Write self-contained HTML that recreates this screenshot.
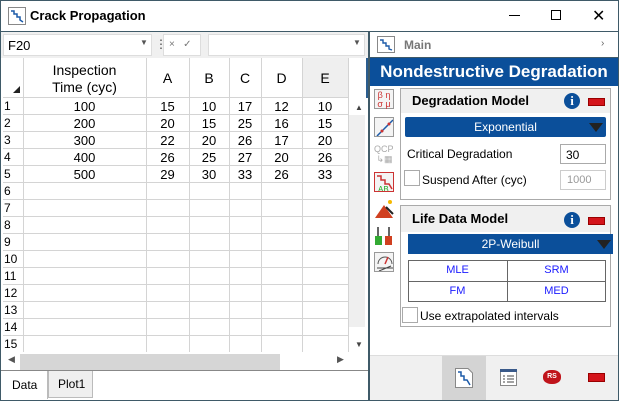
<!DOCTYPE html>
<html><head><style>
*{box-sizing:border-box;margin:0;padding:0}
body{width:619px;height:401px;position:relative;overflow:hidden;background:#fff;font-family:"Liberation Sans",Arial,sans-serif;font-size:12px;color:#000}
.a{position:absolute}
.win{left:0;top:0;width:619px;height:401px;border:1px solid #3f5a68}
.cell{position:absolute;text-align:center;font-size:13px;line-height:17px}
.vl{position:absolute;width:1px;background:#d4d4d4}
.hl{position:absolute;height:1px;background:#d4d4d4}
.rn{position:absolute;left:4px;width:19px;font-size:12px;line-height:17px}
.ic{position:absolute;left:374px;width:20px;height:20px;border:1px solid #999;background:#f4f4f4}
</style></head><body>
<div class="a win"></div>
<!-- title -->
<div class="a" style="left:8px;top:7px;width:18px;height:18px;border:1px solid #888;background:#fff"></div>
<svg class="a" style="left:9px;top:8px" width="16" height="16"><path d="M2 3 L5 3 L5 6 L8 6 L8 9 L11 9 L11 12 L14 14" fill="none" stroke="#1c5aa8" stroke-width="1.5"/></svg>
<div class="a" style="left:30px;top:8px;font-weight:bold;font-size:13px">Crack Propagation</div>
<div class="a" style="left:509px;top:15px;width:11px;height:1px;background:#000"></div>
<div class="a" style="left:551px;top:10px;width:10px;height:10px;border:1px solid #000"></div>
<div class="a" style="left:592px;top:6px;font-size:16px">✕</div>
<div class="a" style="left:1px;top:31px;width:617px;height:1px;background:#3f5a68"></div>
<!-- formula bar -->
<div class="a" style="left:1px;top:32px;width:367px;height:26px;background:#f0f0f0"></div>
<div class="a" style="left:3px;top:34px;width:149px;height:22px;background:#fff;border:1px solid #ddd"></div>
<div class="a" style="left:8px;top:38px;font-size:13px">F20</div>
<div class="a" style="left:140px;top:38px;font-size:8px;color:#555">▼</div>
<div class="a" style="left:155px;top:37px;font-size:12px;color:#444">⋮</div>
<div class="a" style="left:163px;top:34px;width:38px;height:22px;background:#fff;border:1px solid #ddd;color:#777;font-size:10px;padding:4px 0 0 5px">×&nbsp;&nbsp;&nbsp;✓</div>
<div class="a" style="left:208px;top:34px;width:157px;height:22px;background:#fff;border:1px solid #ddd"></div>
<div class="a" style="left:353px;top:38px;font-size:8px;color:#555">▼</div>
<!-- grid -->
<div class="a" style="left:3px;top:58px;width:363px;height:294px;background:#fff"></div>
<div class="a" style="left:302px;top:58px;width:46px;height:40px;background:#efefef"></div>
<div class="a" style="left:348px;top:115px;width:17px;height:212px;background:#efefef"></div>
<div class="a" style="left:355px;top:103px;font-size:8px;color:#444">▲</div>
<div class="a" style="left:355px;top:340px;font-size:8px;color:#444">▼</div>
<div class="a" style="left:366px;top:58px;width:2px;height:40px;background:#2a5d8f"></div>
<div class="vl" style="left:23px;top:58px;height:294px"></div>
<div class="vl" style="left:146px;top:58px;height:294px"></div>
<div class="vl" style="left:189px;top:58px;height:294px"></div>
<div class="vl" style="left:229px;top:58px;height:294px"></div>
<div class="vl" style="left:261px;top:58px;height:294px"></div>
<div class="vl" style="left:302px;top:58px;height:294px"></div>
<div class="vl" style="left:348px;top:58px;height:294px"></div>
<div class="hl" style="left:3px;top:97px;width:345px"></div>
<div class="hl" style="left:3px;top:114px;width:345px"></div>
<div class="hl" style="left:3px;top:131px;width:345px"></div>
<div class="hl" style="left:3px;top:148px;width:345px"></div>
<div class="hl" style="left:3px;top:165px;width:345px"></div>
<div class="hl" style="left:3px;top:182px;width:345px"></div>
<div class="hl" style="left:3px;top:199px;width:345px"></div>
<div class="hl" style="left:3px;top:216px;width:345px"></div>
<div class="hl" style="left:3px;top:233px;width:345px"></div>
<div class="hl" style="left:3px;top:250px;width:345px"></div>
<div class="hl" style="left:3px;top:267px;width:345px"></div>
<div class="hl" style="left:3px;top:284px;width:345px"></div>
<div class="hl" style="left:3px;top:301px;width:345px"></div>
<div class="hl" style="left:3px;top:318px;width:345px"></div>
<div class="hl" style="left:3px;top:335px;width:345px"></div>
<svg class="a" style="left:13px;top:86px" width="8" height="8"><path d="M7 0L7 7L0 7Z" fill="#222"/></svg>
<div class="cell" style="left:23px;top:62px;width:123px;font-size:14px;line-height:17px">Inspection<br>Time (cyc)</div>
<div class="cell" style="left:146px;top:70px;width:43px;font-size:14px">A</div>
<div class="cell" style="left:189px;top:70px;width:40px;font-size:14px">B</div>
<div class="cell" style="left:229px;top:70px;width:32px;font-size:14px">C</div>
<div class="cell" style="left:261px;top:70px;width:41px;font-size:14px">D</div>
<div class="cell" style="left:302px;top:70px;width:46px;font-size:14px">E</div>
<div class="rn" style="top:98px">1</div><div class="rn" style="top:115px">2</div><div class="rn" style="top:132px">3</div><div class="rn" style="top:149px">4</div><div class="rn" style="top:166px">5</div><div class="rn" style="top:183px">6</div><div class="rn" style="top:200px">7</div><div class="rn" style="top:217px">8</div><div class="rn" style="top:234px">9</div><div class="rn" style="top:251px">10</div><div class="rn" style="top:268px">11</div><div class="rn" style="top:285px">12</div><div class="rn" style="top:302px">13</div><div class="rn" style="top:319px">14</div><div class="rn" style="top:336px">15</div>
<div class="cell" style="left:23px;top:98px;width:123px">100<br>200<br>300<br>400<br>500</div>
<div class="cell" style="left:146px;top:98px;width:43px">15<br>20<br>22<br>26<br>29</div>
<div class="cell" style="left:189px;top:98px;width:40px">10<br>15<br>20<br>25<br>30</div>
<div class="cell" style="left:229px;top:98px;width:32px">17<br>25<br>26<br>27<br>33</div>
<div class="cell" style="left:261px;top:98px;width:41px">12<br>16<br>17<br>20<br>26</div>
<div class="cell" style="left:302px;top:98px;width:46px">10<br>15<br>20<br>26<br>33</div>
<!-- hscroll -->
<div class="a" style="left:3px;top:352px;width:363px;height:18px;background:#fff"></div>
<div class="a" style="left:20px;top:354px;width:260px;height:16px;background:#d6d6d6"></div>
<div class="a" style="left:8px;top:354px;font-size:9px;color:#555">◀</div>
<div class="a" style="left:337px;top:354px;font-size:9px;color:#555">▶</div>
<div class="a" style="left:1px;top:370px;width:367px;height:1px;background:#888"></div>
<div class="a" style="left:1px;top:371px;width:367px;height:29px;background:#fff"></div>
<div class="a" style="left:1px;top:371px;width:47px;height:28px;background:#fff;border-right:1px solid #bbb;font-size:12px;padding:7px 0 0 11px">Data</div>
<div class="a" style="left:48px;top:371px;width:45px;height:27px;background:#efefef;border:1px solid #bbb;border-top:none;padding:6px 0 0 9px">Plot1</div>
<div class="a" style="left:368px;top:32px;width:2px;height:368px;background:#3f5a68"></div>
<!-- right panel -->
<div class="a" style="left:370px;top:32px;width:248px;height:25px;background:#fff"></div>
<svg class="a" style="left:377px;top:36px" width="18" height="17"><rect x="0.5" y="0.5" width="17" height="16" fill="#fff" stroke="#888"/><path d="M3 4L6 4L6 7L9 7L9 10L12 10L12 13L15 14" fill="none" stroke="#1c5aa8" stroke-width="1.4"/></svg>
<div class="a" style="left:404px;top:38px;font-weight:bold;color:#777;font-size:12px">Main</div>
<div class="a" style="left:601px;top:38px;color:#666;font-size:10px">›</div>
<div class="a" style="left:368px;top:57px;width:251px;height:1px;background:#3f5a68"></div>
<div class="a" style="left:370px;top:58px;width:248px;height:28px;background:#0b4f9a;color:#fff;font-weight:bold;font-size:17px;text-align:center;line-height:28px">Nondestructive Degradation</div>
<div class="a" style="left:370px;top:86px;width:248px;height:269px;background:#fff"></div>
<div class="ic" style="top:89px;font-size:9px;color:#c33;line-height:9px;text-align:center;padding-top:1px">β η<br>σ μ</div>
<svg class="a ic" style="top:117px" width="20" height="20"><path d="M2 18L18 2" stroke="#1c5aa8" stroke-width="1.5"/><circle cx="7" cy="13" r="1.5" fill="#c33"/><circle cx="14" cy="6" r="1.5" fill="#c33"/></svg>
<div class="a" style="left:374px;top:144px;font-size:9px;color:#aaa">QCP<br>&nbsp;↳▦</div>
<svg class="a ic" style="top:172px;border-color:#c33" width="20" height="20"><path d="M2 3L6 3L6 7L10 7L10 11L14 11L17 16" fill="none" stroke="#c33" stroke-width="1.5"/><text x="3" y="19" font-size="8" fill="#2a2" font-family="Liberation Sans">AB</text></svg>
<svg class="a" style="left:374px;top:199px" width="20" height="20"><path d="M1 19L10 6L19 19Z" fill="#d04020"/><path d="M12 8L19 15" stroke="#222" stroke-width="2"/><circle cx="16" cy="3" r="2" fill="#f5b800"/></svg>
<svg class="a" style="left:374px;top:226px" width="20" height="20"><rect x="1" y="10" width="7" height="9" fill="#3a3"/><rect x="11" y="10" width="7" height="9" fill="#d04020"/><path d="M4 1V10M15 1V10" stroke="#333" stroke-width="1.5"/></svg>
<svg class="a ic" style="top:252px" width="20" height="20"><path d="M3 11A7 7 0 0 1 17 11" fill="none" stroke="#555"/><path d="M10 11L13 4" stroke="#c33" stroke-width="1.5"/><path d="M2 15L18 15M4 18L16 13" stroke="#444"/></svg>
<!-- degradation model box -->
<div class="a" style="left:400px;top:88px;width:211px;height:112px;border:1px solid #aaa;background:#fff"></div>
<div class="a" style="left:401px;top:89px;width:209px;height:24px;background:#f0f0f0"></div>
<div class="a" style="left:412px;top:93px;font-weight:bold;font-size:13px">Degradation Model</div>
<div class="a" style="left:564px;top:93px;width:16px;height:16px;border-radius:50%;background:#0b4f9a;color:#fff;font-weight:bold;font-size:13px;text-align:center;line-height:16px;font-family:'Liberation Serif',serif">i</div>
<div class="a" style="left:588px;top:98px;width:17px;height:8px;background:#d4141b;border:1px solid #900"></div>
<div class="a" style="left:405px;top:117px;width:201px;height:20px;background:#0b4f9a;color:#fff;text-align:center;line-height:20px;font-size:12px;border-radius:2px">Exponential</div>
<svg class="a" style="left:589px;top:123px" width="14" height="9"><path d="M0 0L14 0L7 9Z" fill="#222"/></svg>
<div class="a" style="left:407px;top:147px;font-size:12px">Critical Degradation</div>
<div class="a" style="left:560px;top:144px;width:46px;height:20px;border:1px solid #aaa;padding:3px 0 0 5px">30</div>
<div class="a" style="left:404px;top:170px;width:16px;height:16px;border:1px solid #aaa"></div>
<div class="a" style="left:422px;top:173px;font-size:12px">Suspend After (cyc)</div>
<div class="a" style="left:560px;top:170px;width:46px;height:20px;border:1px solid #ccc;padding:3px 0 0 6px;color:#999;font-size:11px">1000</div>
<!-- life data model box -->
<div class="a" style="left:400px;top:205px;width:211px;height:122px;border:1px solid #aaa;background:#fff"></div>
<div class="a" style="left:401px;top:206px;width:209px;height:26px;background:#f0f0f0"></div>
<div class="a" style="left:412px;top:211px;font-weight:bold;font-size:13px">Life Data Model</div>
<div class="a" style="left:564px;top:212px;width:16px;height:16px;border-radius:50%;background:#0b4f9a;color:#fff;font-weight:bold;font-size:13px;text-align:center;line-height:16px;font-family:'Liberation Serif',serif">i</div>
<div class="a" style="left:588px;top:217px;width:17px;height:8px;background:#d4141b;border:1px solid #900"></div>
<div class="a" style="left:408px;top:234px;width:205px;height:20px;background:#0b4f9a;color:#fff;text-align:center;line-height:20px;font-size:12px">2P-Weibull</div>
<svg class="a" style="left:597px;top:240px" width="14" height="9"><path d="M0 0L14 0L7 9Z" fill="#222"/></svg>
<div class="a" style="left:408px;top:260px;width:198px;height:42px;border:1px solid #666"></div>
<div class="a" style="left:507px;top:260px;width:1px;height:42px;background:#666"></div>
<div class="a" style="left:408px;top:281px;width:198px;height:1px;background:#666"></div>
<div class="a" style="left:408px;top:264px;width:99px;text-align:center;color:#1a1aff;font-size:11px">MLE</div>
<div class="a" style="left:507px;top:264px;width:99px;text-align:center;color:#1a1aff;font-size:11px">SRM</div>
<div class="a" style="left:408px;top:285px;width:99px;text-align:center;color:#1a1aff;font-size:11px">FM</div>
<div class="a" style="left:507px;top:285px;width:99px;text-align:center;color:#1a1aff;font-size:11px">MED</div>
<div class="a" style="left:402px;top:307px;width:16px;height:16px;border:1px solid #aaa"></div>
<div class="a" style="left:420px;top:309px;font-size:12px">Use extrapolated intervals</div>
<!-- bottom bar -->
<div class="a" style="left:370px;top:355px;width:248px;height:45px;background:#f0f0f0;border-top:1px solid #ddd"></div>
<div class="a" style="left:442px;top:356px;width:44px;height:44px;background:#d4d4d4"></div>
<svg class="a" style="left:455px;top:368px" width="18" height="20"><path d="M0.5 0.5H13L17.5 5V19.5H0.5Z" fill="#fff" stroke="#888"/><path d="M3 4L6 4L6 8L9 8L9 12L12 12L15 17" fill="none" stroke="#1c5aa8" stroke-width="1.5"/></svg>
<svg class="a" style="left:500px;top:369px" width="17" height="17"><rect x="0.5" y="0.5" width="16" height="16" fill="#fff" stroke="#888"/><rect x="0" y="0" width="17" height="3" fill="#3a5a8a"/><path d="M3 7H5M7 7H14M3 10H5M7 10H14M3 13H5M7 13H14" stroke="#444"/></svg>
<div class="a" style="left:543px;top:370px;width:18px;height:14px;background:#c0141b;border-radius:45%;color:#fff;font-size:7px;font-weight:bold;text-align:center;line-height:14px">RS</div>
<div class="a" style="left:588px;top:373px;width:17px;height:9px;background:#d4141b;border:1px solid #900"></div>
</body></html>
